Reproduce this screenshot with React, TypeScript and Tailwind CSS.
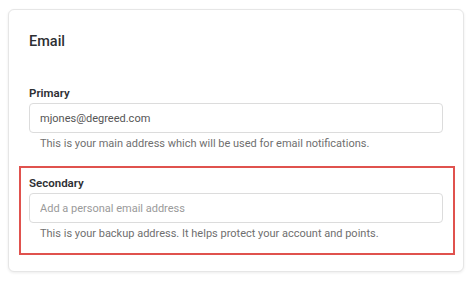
import React from "react";

function Field({
  label,
  value,
  placeholder,
  help,
}: {
  label: string;
  value?: string;
  placeholder?: string;
  help: string;
}) {
  return (
    <div className="flex flex-col">
      <label className="text-[11.5px] leading-4 font-semibold text-[#2d2f33]">
        {label}
      </label>
      <input
        readOnly
        value={value ?? ""}
        placeholder={placeholder}
        className="mt-[2px] h-[30px] w-full rounded-[4px] border border-[#dcdcdc] bg-white px-[10px] text-[11px] text-[#555] outline-none placeholder:text-[#9a9a9a]"
      />
      <p className="mt-[3px] pl-[11px] text-[11px] leading-4 text-[#6f6f6f]">
        {help}
      </p>
    </div>
  );
}

export default function App() {
  return (
    <div className="h-[284px] w-[474px] bg-white pt-[9px] pl-[8px] font-['Roboto',sans-serif]">
      <div className="h-[263px] w-[456px] rounded-[6px] border border-[#e6e6e6] bg-white px-[20px] pt-[22px] shadow-[0_1px_3px_rgba(0,0,0,0.08)]">
        <h2 className="text-[14.5px] leading-5 font-medium text-[#2d2f33]">
          Email
        </h2>
        <div className="mt-[33px]">
          <Field
            label="Primary"
            value="mjones@degreed.com"
            help="This is your main address which will be used for email notifications."
          />
        </div>
        <div className="mt-[14px] -ml-[10px] -mr-[12px] border-2 border-[#e0524e] pt-[7px] pr-[10px] pb-[11px] pl-[8px]">
          <Field
            label="Secondary"
            placeholder="Add a personal email address"
            help="This is your backup address. It helps protect your account and points."
          />
        </div>
      </div>
    </div>
  );
}
